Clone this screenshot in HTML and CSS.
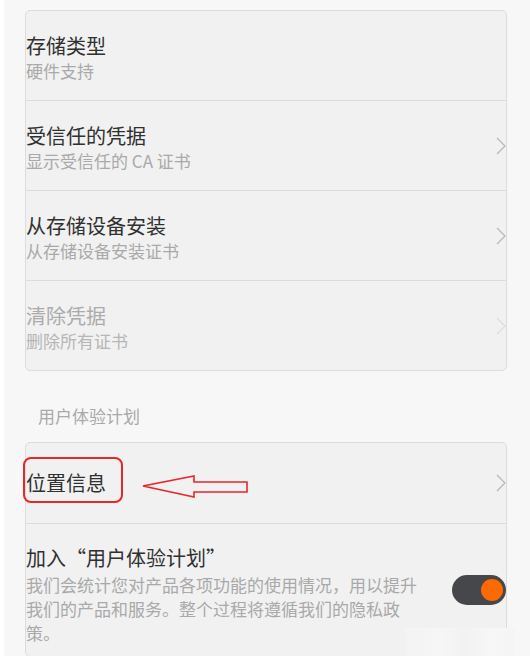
FILE: index.html
```html
<!DOCTYPE html>
<html lang="zh-CN">
<head>
    <meta charset="UTF-8">
    <meta name="viewport" content="width=device-width, initial-scale=1.0">
    <title>凭据存储</title>
    <link rel="stylesheet" href="styles.css">
</head>
<body>
    <div class="screen">
        <div class="card">
            <div class="item">
                <div class="item-text">
                    <div class="item-title">存储类型</div>
                    <div class="item-sub">硬件支持</div>
                </div>
            </div>
            <div class="item">
                <div class="item-text">
                    <div class="item-title">受信任的凭据</div>
                    <div class="item-sub">显示受信任的 CA 证书</div>
                </div>
                <svg class="chevron" width="10" height="18" viewBox="0 0 10 18"><path d="M1 1 L9 9 L1 17" /></svg>
            </div>
            <div class="item">
                <div class="item-text">
                    <div class="item-title">从存储设备安装</div>
                    <div class="item-sub">从存储设备安装证书</div>
                </div>
                <svg class="chevron" width="10" height="18" viewBox="0 0 10 18"><path d="M1 1 L9 9 L1 17" /></svg>
            </div>
            <div class="item disabled">
                <div class="item-text">
                    <div class="item-title">清除凭据</div>
                    <div class="item-sub">删除所有证书</div>
                </div>
                <svg class="chevron" width="10" height="18" viewBox="0 0 10 18"><path d="M1 1 L9 9 L1 17" /></svg>
            </div>
        </div>

        <div class="section-title">用户体验计划</div>

        <div class="card">
            <div class="item item-single">
                <div class="item-title">位置信息</div>
                <svg class="chevron" width="10" height="18" viewBox="0 0 10 18"><path d="M1 1 L9 9 L1 17" /></svg>

                <!-- annotation drawn over the screenshot -->
                <div class="mark-box"></div>
                <svg class="mark-arrow" width="110" height="26" viewBox="0 0 110 26">
                    <polygon points="3,12 54,2 54,8 107,8 107,18 54,18 54,23" />
                </svg>
            </div>
            <div class="item item-toggle">
                <div class="item-text">
                    <div class="item-title">加入“用户体验计划”</div>
                    <div class="item-desc">我们会统计您对产品各项功能的使用情况，用以提升我们的产品和服务。整个过程将遵循我们的隐私政策。</div>
                </div>
                <div class="switch"><div class="knob"></div></div>
            </div>
        </div>

        <div class="mosaic"></div>
    </div>
</body>
</html>
```

FILE: styles.css
```css
html, body {
    margin: 0;
    padding: 0;
    overflow: hidden;
    background: #fff;
}

.screen {
    position: relative;
    margin-left: 4px;
    height: 656px;
    padding: 10px 23px 0 21px;
    background: #f7f7f7;
    font-family: "Noto Sans CJK SC", "Noto Sans", sans-serif;
    overflow: hidden;
}

.card {
    background: #f1f1f1;
    border: 1px solid #dcdcdc;
    border-radius: 5px;
}

.item {
    display: flex;
    align-items: center;
    height: 89px;
}

.item + .item {
    border-top: 1px solid #dcdcdc;
}

.item-text {
    flex: 1;
    padding-top: 4px;
}

.item-title {
    font-size: 20px;
    line-height: 26px;
    color: #303030;
}

.item-sub {
    font-size: 17px;
    line-height: 24px;
    color: #a9a9a9;
}

.chevron {
    flex: none;
    fill: none;
    stroke: #b9b9b9;
    stroke-width: 1.3;
}

.disabled .item-title {
    color: #ababab;
}

.disabled .item-sub {
    color: #b6b6b6;
}

.disabled .chevron {
    stroke: #dedede;
}

.section-title {
    padding: 33px 0 14px 13px;
    font-size: 17px;
    line-height: 24px;
    color: #a9a9a9;
}

.item-single {
    position: relative;
    height: 80px;
    justify-content: space-between;
}

.mark-box {
    position: absolute;
    left: -3px;
    top: 14px;
    width: 96px;
    height: 42px;
    border: 2px solid #e8262c;
    border-radius: 8px;
}

.mark-arrow {
    position: absolute;
    left: 114px;
    top: 31px;
}

.mark-arrow polygon {
    fill: none;
    stroke: #e8262c;
    stroke-width: 1.6;
}

.item-toggle {
    height: 132px;
    align-items: flex-start;
}

.item-toggle .item-text {
    padding: 21px 0 11px;
}

.item-desc {
    width: 400px;
    margin-top: 2px;
    font-size: 17px;
    line-height: 24px;
    color: #a9a9a9;
}

.switch {
    position: relative;
    flex: none;
    align-self: center;
    width: 54px;
    height: 30px;
    border-radius: 15px;
    background: #45474b;
}

.knob {
    position: absolute;
    right: 3px;
    top: 4px;
    width: 22px;
    height: 22px;
    border-radius: 50%;
    background: #ff6a00;
}

/* blurred watermark patch in the corner */
.mosaic {
    position: absolute;
    left: 401px;
    top: 628px;
    width: 110px;
    height: 28px;
    background: linear-gradient(90deg, #f3f3f3, #f6f6f6 30%, #f2f2f2 55%, #f7f7f7 80%, #f5f5f5);
}
```
